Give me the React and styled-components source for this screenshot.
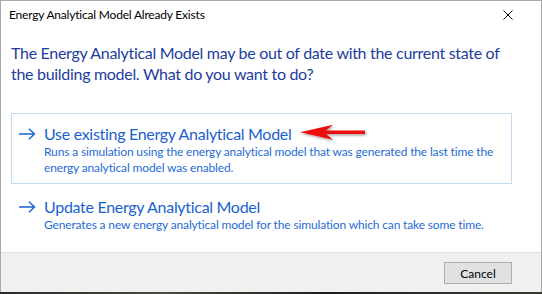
import React from "react";
import styled, { createGlobalStyle } from "styled-components";

const Global = createGlobalStyle`
  html, body { margin: 0; padding: 0; background: #1d1d1d; }
  * { box-sizing: border-box; }
`;

const FONT = `"Lato", "Liberation Sans", sans-serif`;

const Window = styled.div`
  width: 542px;
  height: 292px;
  background: #fff;
  border: 1px solid #a9a9a9;
  border-bottom: none;
  display: flex;
  flex-direction: column;
  font-family: ${FONT};
  overflow: hidden;
`;

const TitleBar = styled.div`
  height: 30px;
  flex: none;
  display: flex;
  align-items: center;
  justify-content: space-between;
  padding: 0 28px 3px 8px;
  font-size: 12px;
  letter-spacing: -0.2px;
  color: #000;
`;

const Content = styled.div`
  flex: 1;
  padding: 11px 29px 0 10px;
  display: flex;
  flex-direction: column;
`;

const Instruction = styled.div`
  font-size: 16px;
  line-height: 21px;
  letter-spacing: -0.3px;
  color: #1d3d9e;
  margin-bottom: 29px;
  padding-right: 8px;
`;

const Links = styled.div`
  display: flex;
  flex-direction: column;
  gap: 2px;
`;

const CommandLink = styled.div`
  position: relative;
  border: 1px solid ${(p) => (p.$focused ? "#c3dcf4" : "transparent")};
  padding: 9px 10px 7px 6px;
  display: grid;
  grid-template-columns: 25px 1fr;
  column-gap: 1px;
`;

const ArrowCell = styled.div`
  height: 21px;
  display: flex;
  align-items: center;
`;

const LinkTitle = styled.div`
  font-size: 16px;
  line-height: 21px;
  letter-spacing: -0.3px;
  color: #1a62cf;
`;

const LinkDesc = styled.div`
  grid-column: 2;
  font-size: 12px;
  line-height: 16px;
  letter-spacing: -0.15px;
  color: #1f6bd6;
`;

const Annotation = styled.svg`
  position: absolute;
  left: 276px;
  top: 8px;
`;

const Footer = styled.div`
  height: 40px;
  flex: none;
  background: #f0f0f0;
  border-top: 1px solid #dfdfdf;
  display: flex;
  align-items: center;
  justify-content: flex-end;
  padding: 0 29px 0 0;
`;

const Button = styled.button`
  width: 68px;
  height: 22px;
  background: #e1e1e1;
  border: 1px solid #adadad;
  font-family: ${FONT};
  font-size: 12px;
  color: #000;
  padding: 0;
  margin-top: 1px;
`;

const Ground = styled.div`
  height: 2px;
  background: linear-gradient(90deg, #2a2a2a, #4a4a40 30%, #1e1e1e 60%, #3a3a34);
`;

const Arrow = () => (
  <svg width="18" height="12" viewBox="0 0 18 12">
    <path d="M1 6 H16.5 M11 0.8 L16.5 6 L11 11.2" fill="none" stroke="#1a62cf" strokeWidth="1.4" />
  </svg>
);

const Close = () => (
  <svg width="10" height="10" viewBox="0 0 10 10">
    <path d="M0.5 0.5 L9.5 9.5 M9.5 0.5 L0.5 9.5" stroke="#000" strokeWidth="1" />
  </svg>
);

function Link({ title, desc, focused, children }) {
  return (
    <CommandLink $focused={focused}>
      <ArrowCell>
        <Arrow />
      </ArrowCell>
      <LinkTitle>{title}</LinkTitle>
      <LinkDesc>{desc}</LinkDesc>
      {children}
    </CommandLink>
  );
}

export default function App() {
  return (
    <>
      <Global />
      <Window>
        <TitleBar>
          <span>Energy Analytical Model Already Exists</span>
          <Close />
        </TitleBar>
        <Content>
          <Instruction>
            The Energy Analytical Model may be out of date with the current state of the building model. What do you want to do?
          </Instruction>
          <Links>
            <Link
              focused
              title="Use existing Energy Analytical Model"
              desc="Runs a simulation using the energy analytical model that was generated the last time the energy analytical model was enabled."
            >
              <Annotation width="82" height="22" viewBox="0 0 82 22">
                <defs>
                  <filter id="sh" x="-20%" y="-50%" width="140%" height="200%">
                    <feDropShadow dx="1" dy="1.5" stdDeviation="1.3" floodColor="#000" floodOpacity="0.35" />
                  </filter>
                </defs>
                <g filter="url(#sh)">
                  <path d="M30 8.6 H77 V12 H30 Z" fill="#ee1111" />
                  <path d="M12 10.3 L45 2.8 L36 10.3 L45 17.8 Z" fill="#ee1111" />
                </g>
              </Annotation>
            </Link>
            <Link
              title="Update Energy Analytical Model"
              desc="Generates a new energy analytical model for the simulation which can take some time."
            />
          </Links>
        </Content>
        <Footer>
          <Button>Cancel</Button>
        </Footer>
      </Window>
      <Ground />
    </>
  );
}
